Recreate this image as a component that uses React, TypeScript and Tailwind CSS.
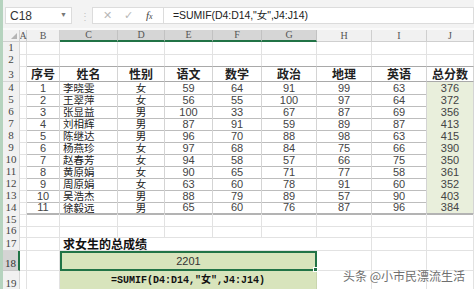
const cols = 'grid grid-cols-[17px_7px_33px_58px_47px_48px_49px_55px_55px_55px_47px]';

const students = [
  [1, '李晓雯', '女', 59, 64, 91, 99, 63, 376],
  [2, '王翠萍', '女', 56, 55, 100, 97, 64, 372],
  [3, '张显益', '男', 100, 33, 67, 87, 69, 356],
  [4, '刘相辉', '男', 87, 91, 59, 89, 87, 413],
  [5, '陈继达', '男', 96, 70, 88, 98, 63, 415],
  [6, '杨燕珍', '女', 97, 68, 84, 75, 66, 390],
  [7, '赵春芳', '女', 94, 58, 57, 66, 75, 350],
  [8, '黄原娟', '女', 90, 65, 71, 77, 58, 361],
  [9, '周原娟', '女', 63, 60, 78, 91, 60, 352],
  [10, '吴浩杰', '男', 88, 79, 89, 57, 90, 403],
  [11, '徐毅远', '男', 65, 60, 76, 87, 96, 384],
];

const heads = ['序号', '姓名', '性别', '语文', '数学', '政治', '地理', '英语', '总分数'];
const letters = ['A', 'B', 'C', 'D', 'E', 'F', 'G', 'H', 'I', 'J'];

const cjk = "font-['Noto_Sans_CJK_SC',sans-serif]";
const num = "font-['Liberation_Sans','Noto_Sans_CJK_SC',sans-serif]";

function RowNo({ n, active = false }: { n: number; active?: boolean }) {
  return (
    <div
      className={
        active
          ? "flex items-end justify-center border-b border-r-2 border-b-[#c8c8c8] border-r-[#217346] bg-[#d4d4d4] pb-[1px] font-['Liberation_Serif',serif] text-[11px] leading-none text-[#333]"
          : "flex items-end justify-center border-b border-r border-[#d6d6d6] bg-[#f1f1f1] pb-[1px] font-['Liberation_Serif',serif] text-[11px] leading-none text-[#444]"
      }
    >
      {n}
    </div>
  );
}

function Blank({ n, h }: { n: number; h: string }) {
  return (
    <div className={`${cols} ${h}`}>
      <RowNo n={n} />
      {letters.map((l) => (
        <div key={l} className="border-b border-r border-[#e2e2e2]" />
      ))}
    </div>
  );
}

export default function App() {
  return (
    <div className="flex h-[289px] w-[474px] overflow-hidden bg-white">
      <div className="w-[3px] shrink-0 bg-[#b5d3be]" />
      <div className="relative w-[471px]">
        {/* formula bar */}
        <div className="flex h-[28px] items-center bg-[#f3f3f3] pt-[3px]">
          <div className="ml-[2px] flex h-[17px] w-[67px] items-center justify-between border border-[#dcdcdc] bg-white pl-[4px] pr-[4px]">
            <span className="font-['Liberation_Sans',sans-serif] text-[12px] text-[#333]">C18</span>
            <span className="text-[7px] text-[#777]">▼</span>
          </div>
          <span className="ml-[7px] w-[12px] text-center text-[10px] leading-none text-[#c4c4c4]">⋮</span>
          <div className="ml-[1px] flex h-[17px] flex-1 items-center border border-[#dcdcdc] bg-white">
            <div className="flex h-full w-[71px] items-center border-r border-[#dcdcdc]">
              <span className="ml-[10px] text-[11px] text-[#b8b8b8]">✕</span>
              <span className="ml-[12px] text-[11px] text-[#b8b8b8]">✓</span>
              <span className="ml-[13px] font-['Liberation_Serif',serif] text-[11px] italic text-[#444]">
                f<span className="text-[8px]">x</span>
              </span>
            </div>
            <span className={`ml-[9px] ${num} text-[10.5px] tracking-[-0.05px] text-[#222]`}>
              =SUMIF(D4:D14,"女",J4:J14)
            </span>
          </div>
        </div>
        <div className="h-[2px] bg-[#fafafa]" />

        {/* column headers */}
        <div className={`${cols} h-[12px]`}>
          <div className="relative border-b border-r border-[#cfcfcf] bg-[#f1f1f1]">
            <div className="absolute bottom-[2px] right-[2px] h-0 w-0 border-b-[6px] border-l-[6px] border-b-[#b4b4b4] border-l-transparent" />
          </div>
          {letters.map((l, i) =>
            i >= 2 && i <= 6 ? (
              <div
                key={l}
                className="flex items-center justify-center border-b-2 border-r border-b-[#217346] border-r-[#c2c2c2] bg-[#d6d6d6] font-['Liberation_Serif',serif] text-[10px] leading-none text-[#555]"
              >
                {l}
              </div>
            ) : (
              <div
                key={l}
                className="flex items-center justify-center border-b border-r border-[#cfcfcf] bg-[#f1f1f1] font-['Liberation_Serif',serif] text-[10px] leading-none text-[#555]"
              >
                {l}
              </div>
            )
          )}
        </div>

        <Blank n={1} h="h-[12px]" />
        <Blank n={2} h="h-[12px]" />

        {/* table header */}
        <div className={`${cols} h-[16px]`}>
          <RowNo n={3} />
          <div className="border-b border-r border-[#e2e2e2]" />
          {heads.map((h) => (
            <div
              key={h}
              className={`flex items-center justify-center border-b border-r border-t border-b-[#a9a9a9] border-r-[#d4d4d4] border-t-[#a9a9a9] ${cjk} text-[12px] font-bold leading-none text-[#222]`}
            >
              {h}
            </div>
          ))}
        </div>

        {/* data rows */}
        {students.map((s, r) => (
          <div key={r} className={`${cols} h-[12px]`}>
            <RowNo n={r + 4} />
            <div className="border-b border-r border-[#e2e2e2]" />
            {s.map((v, c) => {
              const last = r === students.length - 1;
              const bottom = last ? 'border-b-2 border-b-[#b3b3b3]' : 'border-b border-b-[#bdbdbd]';
              if (c === 1)
                return (
                  <div key={c} className={`flex items-center ${bottom} border-r border-r-[#d4d4d4] pl-[3px] ${cjk} text-[10.5px] leading-[10px] text-[#222]`}>
                    {v}
                  </div>
                );
              if (c === 2)
                return (
                  <div key={c} className={`flex items-center justify-center ${bottom} border-r border-r-[#d4d4d4] ${cjk} text-[10.5px] leading-[10px] text-[#222]`}>
                    {v}
                  </div>
                );
              if (c === 8)
                return (
                  <div key={c} className={`flex items-center justify-center ${bottom} border-r border-r-[#d4d4d4] bg-[#e9efdc] ${num} text-[11px] leading-none text-[#444]`}>
                    {v}
                  </div>
                );
              return (
                <div key={c} className={`flex items-center justify-center ${bottom} border-r border-r-[#d4d4d4] ${num} text-[11px] leading-none text-[#444]`}>
                  {v}
                </div>
              );
            })}
          </div>
        ))}

        <Blank n={15} h="h-[11px]" />
        <Blank n={16} h="h-[12px]" />

        {/* row 17 */}
        <div className={`${cols} h-[14px]`}>
          <RowNo n={17} />
          <div className="border-b border-r border-[#e2e2e2]" />
          <div className="border-b border-r border-[#e2e2e2]" />
          <div className={`col-span-5 flex items-center border-b border-[#e2e2e2] pl-[3px] ${cjk} text-[12px] font-bold leading-none text-[#111]`}>
            求女生的总成绩
          </div>
          <div className="border-b border-r border-[#e2e2e2]" />
          <div className="border-b border-r border-[#e2e2e2]" />
          <div className="border-b border-r border-[#e2e2e2]" />
        </div>

        {/* row 18 */}
        <div className={`${cols} h-[20px]`}>
          <RowNo n={18} active />
          <div className="border-b border-r border-[#e2e2e2]" />
          <div className="border-b border-r border-[#e2e2e2]" />
          <div className={`relative col-span-5 flex items-center justify-center border-2 border-[#217346] bg-[#d8e4bc] ${num} text-[11px] leading-none text-[#333]`}>
            2201
            <div className="absolute -bottom-[3px] -right-[3px] h-[5px] w-[5px] border border-white bg-[#217346]" />
          </div>
          <div className="border-b border-r border-[#e2e2e2]" />
          <div className="border-b border-r border-[#e2e2e2]" />
          <div className="border-b border-r border-[#e2e2e2]" />
        </div>

        {/* row 19 */}
        <div className={`${cols} h-[20px]`}>
          <RowNo n={19} />
          <div className="border-b border-r border-[#e2e2e2]" />
          <div className="border-b border-r border-[#e2e2e2]" />
          <div className="col-span-5 flex items-center justify-center border-b border-r border-[#c9d6ae] bg-[#d8e4bc] font-['Liberation_Mono','Noto_Sans_CJK_SC',monospace] text-[10px] font-bold leading-none text-[#111]">
            =SUMIF(D4:D14,"女",J4:J14)
          </div>
          <div className="border-b border-r border-[#e2e2e2]" />
          <div className="border-b border-r border-[#e2e2e2]" />
          <div className="border-b border-r border-[#e2e2e2]" />
        </div>

        {/* watermark */}
        <div className={`absolute left-[340px] top-[270px] whitespace-nowrap ${cjk} text-[12px] leading-none text-[#6f6f6f] [text-shadow:0_0_2px_#fff]`}>
          头条 @小市民漂流生活
        </div>
      </div>
    </div>
  );
}
